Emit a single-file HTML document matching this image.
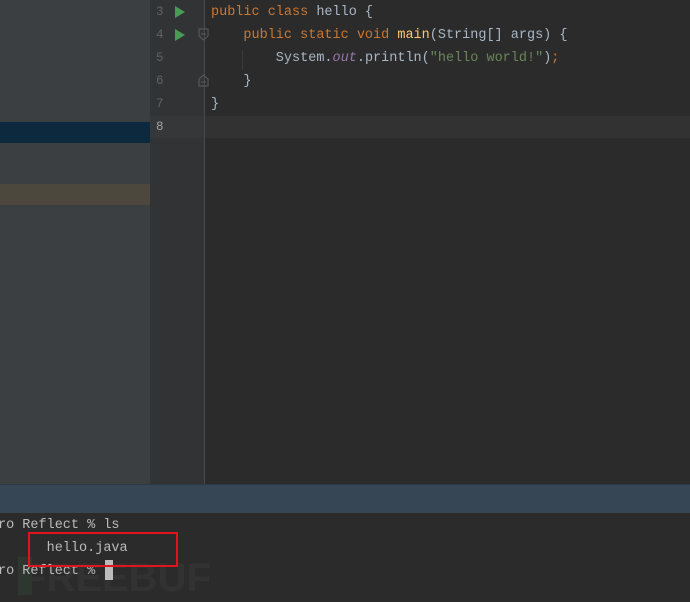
<!DOCTYPE html>
<html><head><style>
body{margin:0;width:690px;height:602px;overflow:hidden;background:#2b2b2b;position:relative;font-family:"Liberation Mono",monospace;}
div{position:absolute;}
.code{font-size:13.5px;white-space:pre;line-height:23px;}
.ln{color:#606366;font-size:12.5px;left:156px;width:12px;line-height:23px;}
.k{color:#cc7832}.f{color:#ffc66d}.s{color:#6a8759}.o{color:#9876aa;font-style:italic}
</style></head><body>
<div style="left:0;top:0;width:150px;height:484px;background:#3c3f41"></div>
<div style="left:0;top:122px;width:150px;height:21px;background:#0d293e"></div>
<div style="left:0;top:184px;width:150px;height:21px;background:#4c483e"></div>
<div style="left:150px;top:0;width:54px;height:484px;background:#313335"></div>
<div style="left:204px;top:0;width:1px;height:484px;background:#4a4a4a"></div>
<div style="left:205px;top:116px;width:485px;height:22px;background:#323232"></div>
<div style="left:150px;top:116px;width:54px;height:22px;background:#353739"></div>
<div class="ln" style="top:1px">3</div>
<div class="ln" style="top:24px">4</div>
<div class="ln" style="top:47px">5</div>
<div class="ln" style="top:70px">6</div>
<div class="ln" style="top:93px">7</div>
<div class="ln" style="top:116px;color:#a4a3a3">8</div>
<svg style="position:absolute;left:174px;top:6px" width="12" height="40"><path d="M1 0 L11 6 L1 12Z" fill="#499c54"/><path d="M1 23 L11 29 L1 35Z" fill="#499c54"/></svg>
<svg style="position:absolute;left:198px;top:28px" width="12" height="60"><path d="M1 1H10V8L5.5 12L1 8Z" fill="none" stroke="#5a5d60"/><path d="M3 6H8" stroke="#5a5d60"/><path d="M1 58V51L5.5 47L10 51V58Z" fill="none" stroke="#5a5d60"/><path d="M3 54H8" stroke="#5a5d60"/></svg>
<div style="left:242px;top:50px;width:1px;height:20px;background:#3b3b3b"></div>
<div class="code" style="left:211px;top:1px;color:#a9b7c6"><span class="k">public class</span> hello {
    <span class="k">public static void</span> <span class="f">main</span>(String[] args) {
        System.<span class="o">out</span>.println(<span class="s">"hello world!"</span>)<span class="k">;</span>
    }
}</div>
<div style="left:0;top:484px;width:690px;height:28px;background:#364655;border-top:1px solid #2e3a45"></div>
<div style="left:22px;top:556px;font-family:'Liberation Sans',sans-serif;font-weight:bold;font-size:40px;color:#323232;">FREEBUF</div>
<div style="left:18px;top:557px;width:14px;height:38px;background:#2e372f"></div>
<div class="code" style="left:-2px;top:514px;color:#bbbbbb;line-height:23px">ro Reflect % ls
      hello.java
ro Reflect % </div>
<div style="left:105px;top:560px;width:8px;height:20px;background:#bbbbbb"></div>
<div style="left:28px;top:532px;width:146px;height:31px;border:2px solid #e0141a"></div>
</body></html>
